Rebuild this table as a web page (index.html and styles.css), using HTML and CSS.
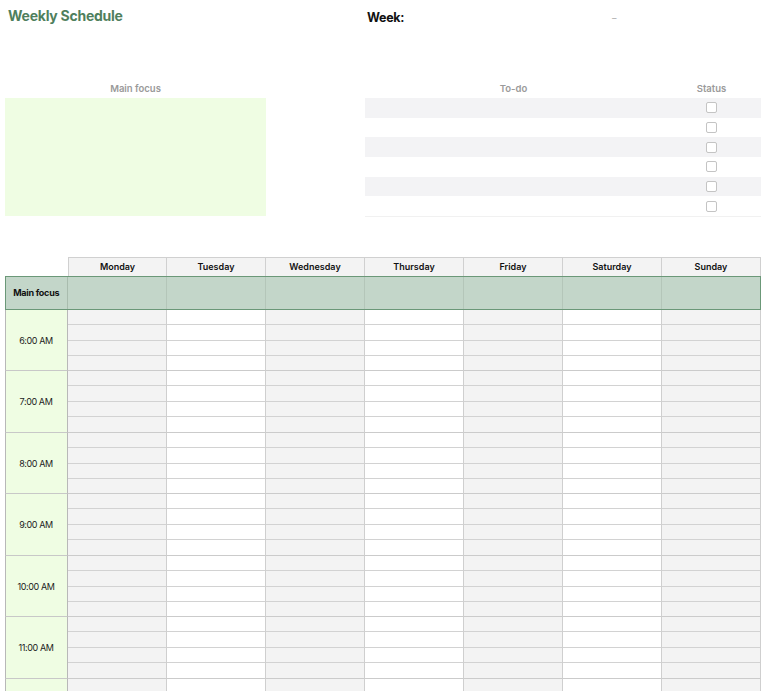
FILE: index.html
```html
<!DOCTYPE html>
<html lang="en">
<head>
<meta charset="utf-8">
<title>Weekly Schedule</title>
<link rel="stylesheet" href="styles.css">
</head>
<body>
<div class="page">
  <header class="top">
    <h1 class="title">Weekly Schedule</h1>
    <div class="week">
      <span class="week-label">Week:</span>
      <span class="week-dash">–</span>
    </div>
  </header>

  <section class="panels">
    <div class="focus-panel">
      <div class="panel-label">Main focus</div>
      <div class="focus-box"></div>
    </div>
    <div class="todo-panel">
      <div class="todo-head">
        <div class="panel-label">To-do</div>
        <div class="panel-label">Status</div>
      </div>
      <div class="todo-list">
        <div class="todo-row stripe"><span></span><span class="check"></span></div>
        <div class="todo-row"><span></span><span class="check"></span></div>
        <div class="todo-row stripe"><span></span><span class="check"></span></div>
        <div class="todo-row"><span></span><span class="check"></span></div>
        <div class="todo-row stripe"><span></span><span class="check"></span></div>
        <div class="todo-row"><span></span><span class="check"></span></div>
      </div>
    </div>
  </section>

  <section class="schedule">
    <div class="row head-row">
      <div class="corner"></div>
      <div class="day-head first">Monday</div>
      <div class="day-head">Tuesday</div>
      <div class="day-head">Wednesday</div>
      <div class="day-head">Thursday</div>
      <div class="day-head">Friday</div>
      <div class="day-head">Saturday</div>
      <div class="day-head">Sunday</div>
    </div>
    <div class="row focus-row">
      <div class="focus-label">Main focus</div>
      <div class="focus-cell"></div><div class="focus-cell"></div><div class="focus-cell"></div>
      <div class="focus-cell"></div><div class="focus-cell"></div><div class="focus-cell"></div>
      <div class="focus-cell last"></div>
    </div>

    <div class="row hour">
      <div class="time">6:00 AM</div>
      <div class="slot grey"></div><div class="slot"></div><div class="slot grey"></div><div class="slot"></div><div class="slot grey"></div><div class="slot"></div><div class="slot grey"></div>
    </div>
    <div class="row hour">
      <div class="time">7:00 AM</div>
      <div class="slot grey"></div><div class="slot"></div><div class="slot grey"></div><div class="slot"></div><div class="slot grey"></div><div class="slot"></div><div class="slot grey"></div>
    </div>
    <div class="row hour">
      <div class="time">8:00 AM</div>
      <div class="slot grey"></div><div class="slot"></div><div class="slot grey"></div><div class="slot"></div><div class="slot grey"></div><div class="slot"></div><div class="slot grey"></div>
    </div>
    <div class="row hour">
      <div class="time">9:00 AM</div>
      <div class="slot grey"></div><div class="slot"></div><div class="slot grey"></div><div class="slot"></div><div class="slot grey"></div><div class="slot"></div><div class="slot grey"></div>
    </div>
    <div class="row hour">
      <div class="time">10:00 AM</div>
      <div class="slot grey"></div><div class="slot"></div><div class="slot grey"></div><div class="slot"></div><div class="slot grey"></div><div class="slot"></div><div class="slot grey"></div>
    </div>
    <div class="row hour">
      <div class="time">11:00 AM</div>
      <div class="slot grey"></div><div class="slot"></div><div class="slot grey"></div><div class="slot"></div><div class="slot grey"></div><div class="slot"></div><div class="slot grey"></div>
    </div>
    <div class="row hour">
      <div class="time"></div>
      <div class="slot grey"></div><div class="slot"></div><div class="slot grey"></div><div class="slot"></div><div class="slot grey"></div><div class="slot"></div><div class="slot grey"></div>
    </div>
  </section>
</div>
</body>
</html>
```

FILE: styles.css
```css
* { box-sizing: border-box; }

html, body {
  margin: 0;
  padding: 0;
  background: #ffffff;
  font-family: Inter, "Liberation Sans", Arial, sans-serif;
  color: #111;
}

html { overflow: hidden; }

.page {
  width: 768px;
  padding: 6px 7px 0 5px;
}

/* ---------- top ---------- */
.top {
  display: grid;
  grid-template-columns: 362px 1fr;
  height: 20px;
}

.title {
  margin: 0 0 0 3px;
  font-size: 14px;
  line-height: 20px;
  font-weight: 700;
  color: #4f7f5d;
  letter-spacing: -0.25px;
}

.week {
  display: flex;
  align-items: center;
  height: 22px;
}

.week-label {
  font-size: 12.5px;
  font-weight: 700;
  color: #111;
  letter-spacing: -0.3px;
  width: 245px;
}

.week-dash {
  font-size: 9px;
  color: #aaa;
}

/* ---------- panels ---------- */
.panels {
  display: grid;
  grid-template-columns: 261px 99px 396px;
  margin-top: 55px;
}

.focus-panel { grid-column: 1; }
.todo-panel { grid-column: 3; }

.panel-label {
  font-size: 9.5px;
  font-weight: 600;
  color: #9a9a9a;
  text-align: center;
  line-height: 15px;
  height: 17px;
}

.focus-box {
  height: 118px;
  background: #effde3;
}

.todo-head {
  display: grid;
  grid-template-columns: 297px 99px;
}

.todo-list {
  border-bottom: 1px solid #f1f1f1;
}

.todo-row {
  display: grid;
  grid-template-columns: 297px 99px;
  align-items: center;
  height: 19.67px;
}

.todo-row.stripe { background: #f3f3f5; }

.check {
  justify-self: center;
  width: 11px;
  height: 11px;
  border: 1px solid #c4c4c4;
  border-radius: 2px;
  background: #fff;
  margin-left: -1px;
}

/* ---------- schedule ---------- */
.schedule {
  margin-top: 40px;
  width: 756px;
}

.row {
  display: grid;
  grid-template-columns: 63px repeat(7, 99px);
}

.head-row { height: 19px; }

.day-head {
  background: #f3f3f3;
  border-top: 1px solid #d0d0d0;
  border-right: 1px solid #d0d0d0;
  font-size: 9px;
  font-weight: 600;
  text-align: center;
  line-height: 17px;
  color: #111;
}

.day-head.first { border-left: 1px solid #d0d0d0; }

.focus-row {
  height: 34px;
  background: #c3d6c9;
  border: 1.5px solid #6b9878;
  grid-template-columns: 61.5px repeat(6, 99px) 1fr;
}

.focus-label {
  font-size: 9px;
  font-weight: 700;
  display: flex;
  align-items: center;
  justify-content: center;
  border-right: 1px solid #a9bcae;
  letter-spacing: -0.25px;
}

.focus-cell { border-right: 1px solid #b4c6b9; }
.focus-cell.last { border-right: 0; }

.hour { height: 61.5px; }

.time {
  background: #effde3;
  border-left: 1px solid #b8b8b8;
  border-right: 1px solid #b8b8b8;
  border-bottom: 1px solid #c8c8c8;
  font-size: 9px;
  display: flex;
  align-items: center;
  justify-content: center;
  letter-spacing: -0.4px;
  color: #222;
  padding-right: 1px;
}

.slot {
  background-color: #ffffff;
  border-right: 1px solid #cfcfcf;
  border-bottom: 1px solid #cbcbcb;
  background-image: repeating-linear-gradient(to bottom, transparent 0, transparent 14.4px, #d2d2d2 14.4px, #d2d2d2 15.4px);
}

.slot.grey { background-color: #f3f3f3; }
```
